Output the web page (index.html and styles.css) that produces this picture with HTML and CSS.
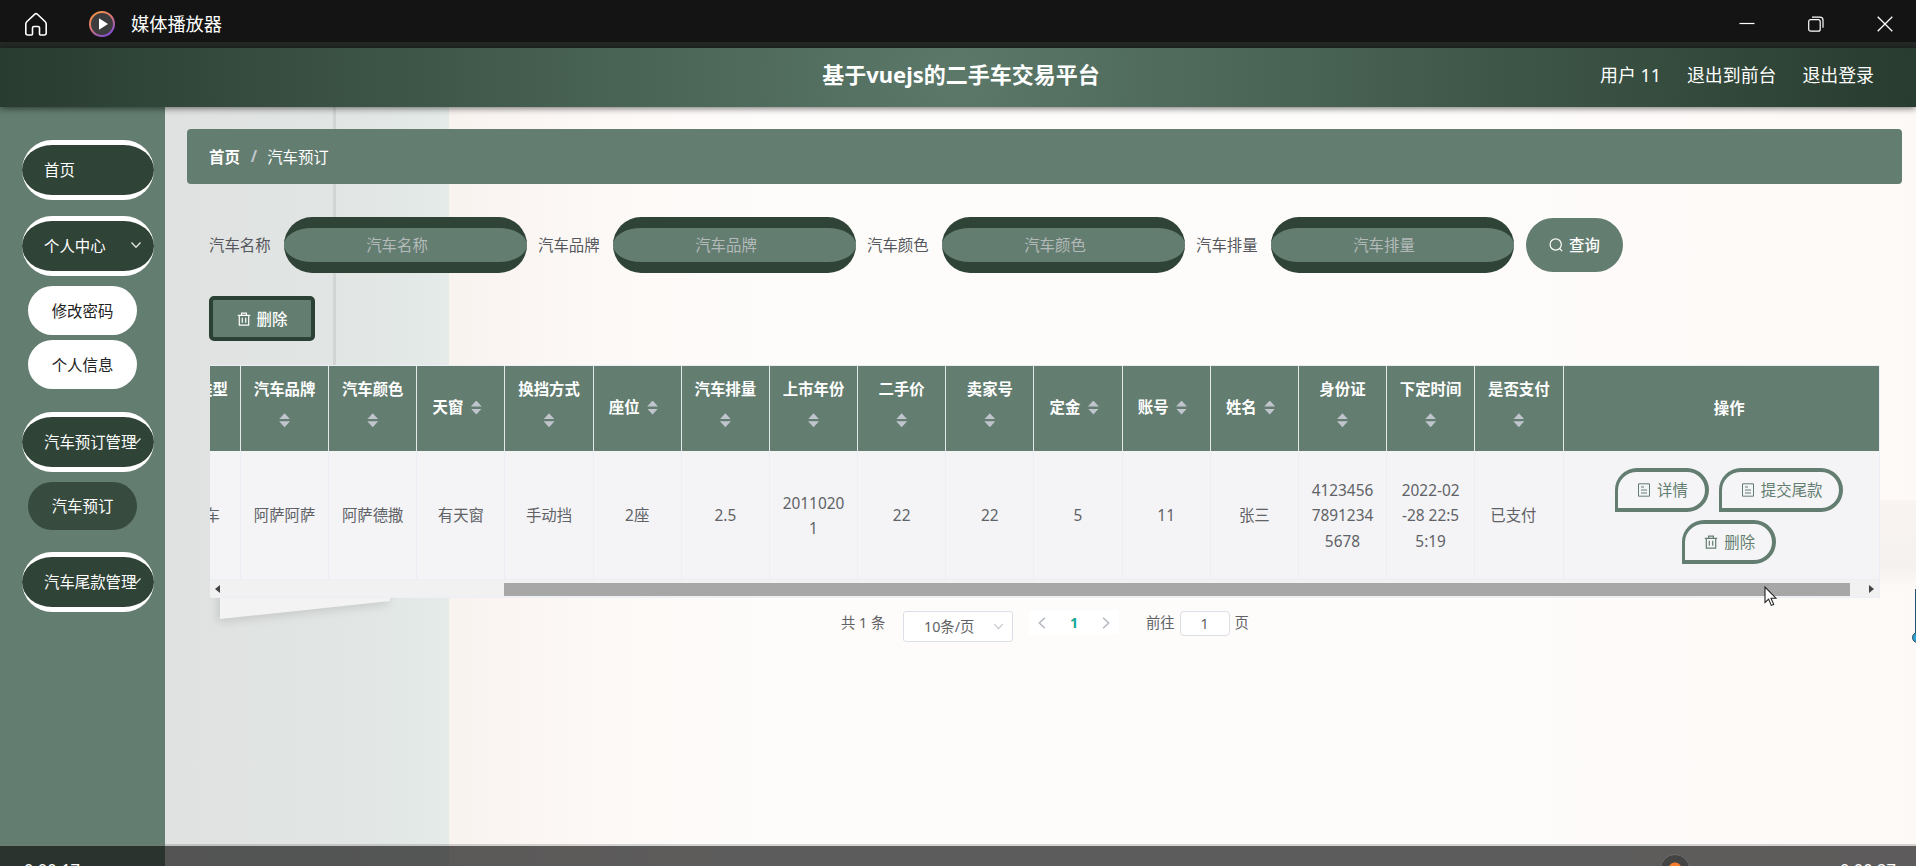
FILE: index.html
```html
<!DOCTYPE html>
<html lang="zh-CN">
<head>
    <meta charset="UTF-8">
    <meta name="viewport" content="width=device-width, initial-scale=1.0">
    <title>基于vuejs的二手车交易平台</title>
    <link rel="stylesheet" href="styles.css">
</head>
<body>
    <svg class="sprite">
        <symbol id="i-chevron" viewBox="0 0 12 12"><path d="M1.500 3.500 6 8.300l4.500-4.800" fill="none" stroke="currentColor" stroke-width="1.300"/></symbol>
        <symbol id="i-trash" viewBox="0 0 14 14"><path d="M.8 3.300h12.400M4.600 3V1.200h4.800V3M2.300 3.500v9.700h9.400V3.500M5.300 5.800v5M8.700 5.800v5" fill="none" stroke="currentColor" stroke-width="1.200"/></symbol>
        <symbol id="i-doc" viewBox="0 0 14 14"><path d="M1.500.8h11v12.400h-11zM4 4h3M4 7h6M4 10h6" fill="none" stroke="currentColor" stroke-width="1"/></symbol>
        <symbol id="i-search" viewBox="0 0 14 14"><circle cx="6.700" cy="6.500" r="5.600" fill="none" stroke="currentColor" stroke-width="1.200"/><path d="m10.700 10.600 2.500 2.600" stroke="currentColor" stroke-width="1.200"/></symbol>
    </svg>

    <div class="titlebar">
        <svg class="home" width="24" height="26" viewBox="0 0 24 26"><path d="M3 10.500 10.600 3.300a2 2 0 0 1 2.800 0L21 10.500c.8.800 1.200 1.600 1.200 2.500v9a2 2 0 0 1-2 2h-3.700a1 1 0 0 1-1-1v-6a1.500 1.500 0 0 0-1.500-1.500h-4A1.500 1.500 0 0 0 8.500 17v6a1 1 0 0 1-1 1H3.800a2 2 0 0 1-2-2v-9c0-.9.400-1.700 1.200-2.500z" fill="none" stroke="#fff" stroke-width="1.600"/></svg>
        <svg class="logo" width="26" height="26" viewBox="0 0 26 26">
            <defs><linearGradient id="ring" x1="0" y1="0" x2=".6" y2="1"><stop offset="0" stop-color="#ff9a3c"/><stop offset=".5" stop-color="#d9776f"/><stop offset="1" stop-color="#8a52d0"/></linearGradient></defs>
            <circle cx="13" cy="13" r="12" fill="#3c3c3e" stroke="url(#ring)" stroke-width="2"/>
            <path d="M10 7.200v11.600l9-5.800z" fill="#fff"/>
        </svg>
        <span class="app-name">媒体播放器</span>
        <div class="win-buttons">
            <svg width="16" height="16" viewBox="0 0 16 16"><path d="M.5 7.500h15" stroke="#fff" stroke-width="1.200"/></svg>
            <svg width="16" height="16" viewBox="0 0 16 16"><rect x=".7" y="3.700" width="11.500" height="11.500" rx="2" fill="none" stroke="#fff" stroke-width="1.200"/><path d="M4 1.200h8a3 3 0 0 1 3 3v7.500" fill="none" stroke="#fff" stroke-width="1.200"/></svg>
            <svg width="16" height="16" viewBox="0 0 16 16"><path d="m.7.700 14.600 14.600M15.300.7.700 15.300" stroke="#fff" stroke-width="1.300"/></svg>
        </div>
    </div>

    <header class="header">
        <h1 class="header-title">基于vuejs的二手车交易平台</h1>
        <div class="header-links">
            <span>用户 11</span>
            <span>退出到前台</span>
            <span>退出登录</span>
        </div>
    </header>

    <div class="container">
        <nav class="sidebar">
            <div class="menu-item">首页</div>
            <div class="menu-item">个人中心<svg class="arrow"><use href="#i-chevron"/></svg></div>
            <div class="submenu">
                <div class="sub-item">修改密码</div>
                <div class="sub-item">个人信息</div>
            </div>
            <div class="menu-item">汽车预订管理<svg class="arrow"><use href="#i-chevron"/></svg></div>
            <div class="submenu">
                <div class="sub-item active">汽车预订</div>
            </div>
            <div class="menu-item">汽车尾款管理<svg class="arrow"><use href="#i-chevron"/></svg></div>
        </nav>

        <main class="main">
            <div class="scene">
                <i class="wall"></i>
                <i class="wall-line"></i>
                <div class="shelf-shadow"><i class="shelf"></i></div>
                <i class="sill"></i>
                <i class="slider"></i>
                <i class="slider-knob"></i>
            </div>

            <div class="breadcrumb"><b>首页</b><span class="sep">/</span><span>汽车预订</span></div>

            <div class="content">
                <div class="search-form">
                    <label>汽车名称</label><input type="text" placeholder="汽车名称">
                    <label>汽车品牌</label><input type="text" placeholder="汽车品牌">
                    <label>汽车颜色</label><input type="text" placeholder="汽车颜色">
                    <label>汽车排量</label><input type="text" placeholder="汽车排量">
                    <button class="btn-search"><svg class="icon"><use href="#i-search"/></svg>查询</button>
                </div>

                <button class="btn-delete"><svg class="icon"><use href="#i-trash"/></svg>删除</button>

                <div class="table-box">
                    <table class="table">
                        <colgroup>
                            <col class="col-type"><col><col><col><col><col><col><col><col><col><col><col><col><col><col><col><col class="col-ops">
                        </colgroup>
                        <thead>
                            <tr>
                                <th class="cut"><div class="th two"><span>汽车类型</span></div></th>
                                <th><div class="th two">汽车品牌<i class="caret"></i></div></th>
                                <th><div class="th two">汽车颜色<i class="caret"></i></div></th>
                                <th><div class="th">天窗<i class="caret"></i></div></th>
                                <th><div class="th two">换挡方式<i class="caret"></i></div></th>
                                <th><div class="th">座位<i class="caret"></i></div></th>
                                <th><div class="th two">汽车排量<i class="caret"></i></div></th>
                                <th><div class="th two">上市年份<i class="caret"></i></div></th>
                                <th><div class="th two">二手价<i class="caret"></i></div></th>
                                <th><div class="th two">卖家号<i class="caret"></i></div></th>
                                <th><div class="th">定金<i class="caret"></i></div></th>
                                <th><div class="th">账号<i class="caret"></i></div></th>
                                <th><div class="th">姓名<i class="caret"></i></div></th>
                                <th><div class="th two">身份证<i class="caret"></i></div></th>
                                <th><div class="th two">下定时间<i class="caret"></i></div></th>
                                <th><div class="th two">是否支付<i class="caret"></i></div></th>
                                <th class="ops">操作</th>
                            </tr>
                        </thead>
                        <tbody>
                            <tr>
                                <td class="cut"><div class="cut-text"><span>轿车</span></div></td>
                                <td>阿萨阿萨</td>
                                <td>阿萨德撒</td>
                                <td>有天窗</td>
                                <td>手动挡</td>
                                <td>2座</td>
                                <td>2.5</td>
                                <td>20110201</td>
                                <td>22</td>
                                <td>22</td>
                                <td>5</td>
                                <td>11</td>
                                <td>张三</td>
                                <td>412345678912345678</td>
                                <td>2022-02<br>-28 22:5<br>5:19</td>
                                <td class="paid">已支付</td>
                                <td class="ops">
                                    <div class="ops-row">
                                        <button class="btn-op"><svg class="icon"><use href="#i-doc"/></svg>详情</button>
                                        <button class="btn-op"><svg class="icon"><use href="#i-doc"/></svg>提交尾款</button>
                                        <button class="btn-op"><svg class="icon"><use href="#i-trash"/></svg>删除</button>
                                    </div>
                                </td>
                            </tr>
                        </tbody>
                    </table>
                    <div class="scrollbar">
                        <i class="scroll-left"></i>
                        <div class="thumb"></div>
                        <i class="scroll-right"></i>
                    </div>
                </div>

                <div class="pagination">
                    <span class="total">共 1 条</span>
                    <div class="page-size"><span>10条/页</span><svg class="arrow"><use href="#i-chevron"/></svg></div>
                    <div class="pager">
                        <svg class="prev"><use href="#i-chevron"/></svg>
                        <b>1</b>
                        <svg class="next"><use href="#i-chevron"/></svg>
                    </div>
                    <span class="jump">前往</span>
                    <input class="page-input" type="text" value="1">
                    <span>页</span>
                </div>
            </div>
        </main>
    </div>

    <div class="player">
        <span>0:00:17</span>
        <i class="knob"></i>
        <span class="time-left">0:00:27</span>
    </div>

    <svg class="cursor" width="14" height="21" viewBox="0 0 14 21"><path d="M1 1v15.500l3.600-3.400 2.700 6.300 2.400-1-2.700-6.200h4.900z" fill="#fff" stroke="#222" stroke-width="1.100"/></svg>
</body>
</html>
```
FILE: styles.css
```css
* {
    box-sizing: border-box;
}
body {
    margin: 0;
    height: 866px;
    overflow: hidden;
    display: flex;
    flex-direction: column;
    position: relative;
    font-family: "Noto Sans", "Noto Sans CJK SC", sans-serif;
    font-size: 15.4px;
    color: #606266;
}
button, input {
    font-family: inherit;
    font-size: inherit;
}
.sprite {
    position: absolute;
    width: 0;
    height: 0;
}
.icon {
    width: 14px;
    height: 14px;
    flex: none;
}

/* window title bar */
.titlebar {
    height: 48px;
    flex: none;
    display: flex;
    align-items: flex-start;
    background: #141414;
    border-bottom: 6px solid #252a27;
    padding: 11px 23px 0 24px;
    color: #fff;
}
.logo {
    margin-left: 41px;
}
.app-name {
    margin-left: 16px;
    font-size: 18.2px;
    line-height: 27px;
}
.win-buttons {
    margin: 5px 0 0 auto;
    display: flex;
    gap: 53px;
}

/* page header */
.header {
    height: 59px;
    flex: none;
    position: relative;
    z-index: 2;
    display: grid;
    grid-template-columns: 1fr auto 1fr;
    align-items: center;
    padding: 0 42px 8px 48px;
    color: #fff;
    background: radial-gradient(ellipse 1010px 1010px at 50% 50%, #5b7869 0%, #25392c 100%);
    box-shadow: 0 1px 7px rgba(0, 0, 0, 0.6);
}
.header-title {
    grid-column: 2;
    margin: 0;
    font-size: 22px;
    line-height: 30px;
}
.header-links {
    display: flex;
    justify-content: flex-end;
    gap: 26px;
    font-size: 17.9px;
}

.container {
    flex: 1;
    display: flex;
    min-height: 0;
}

/* sidebar */
.sidebar {
    width: 165px;
    flex: none;
    background: #637d70;
    padding: 33px 11px 0 22px;
}
.menu-item {
    height: 60px;
    margin-bottom: 16px;
    padding: 0 0 1px 22px;
    display: flex;
    align-items: center;
    position: relative;
    white-space: nowrap;
    color: #fff;
    background: #2f4337;
    border-top: 5px solid #fff;
    border-bottom: 5px solid #fff;
    border-radius: 30px;
}
.menu-item .arrow {
    position: absolute;
    right: 12px;
    top: 18px;
    width: 12px;
    height: 12px;
    color: #e0e4e1;
}
.submenu {
    display: flex;
    flex-direction: column;
    gap: 5px;
    margin: -6px 0 22.5px 6px;
}
.sub-item {
    width: 109px;
    height: 49px;
    display: flex;
    align-items: center;
    justify-content: center;
    color: #222;
    background: #fff;
    border-radius: 25px;
}
.sub-item.active {
    height: 48px;
    color: #fff;
    background: #374b3f;
}

/* main area */
.main {
    flex: 1;
    min-width: 0;
    position: relative;
    padding: 22px 14px 0 22px;
    background: linear-gradient(90deg, #f9f3f0 284px, #fcf8f6 420px, #fefcfb 600px, #fefcfb 1300px, #fdf9f7);
}
.scene {
    position: absolute;
    inset: 0;
    overflow: hidden;
}
.scene i {
    position: absolute;
}
.wall {
    left: 0;
    top: 0;
    bottom: 0;
    width: 284px;
    background: linear-gradient(90deg, #dfe2e1, #e1e5e3 60%, #e4ebe8);
}
.wall-line {
    left: 168px;
    top: 0;
    width: 3px;
    height: 260px;
    background: #d3d5d4;
}
.shelf-shadow {
    position: absolute;
    inset: 0;
    filter: drop-shadow(-2px 3px 5px rgba(0, 0, 0, 0.12));
}
.shelf {
    left: 55px;
    top: 480px;
    width: 170px;
    height: 32px;
    background: #f3f3f3;
    clip-path: polygon(0 0, 100% 0, 100% 44%, 0 100%);
}
.sill {
    right: 0;
    top: 393px;
    width: 38px;
    height: 89px;
    background: linear-gradient(#f9f4f1, #f5f1ee 75%, #fdfaf8);
}
.slider {
    right: 0;
    top: 482px;
    width: 1px;
    height: 45px;
    background: #26536b;
}
.slider-knob {
    right: -7px;
    top: 525px;
    width: 11px;
    height: 11px;
    background: #2f9fd0;
    border: 1px solid #2b4a5c;
    border-radius: 50%;
}
.breadcrumb {
    position: relative;
    height: 55px;
    padding: 0 0 1px 22px;
    display: flex;
    align-items: center;
    color: #fff;
    background: #637d70;
    border-radius: 4px;
}
.sep {
    margin: 0 10px 0 11px;
    color: #c0c4cc;
    font-weight: bold;
}
.content {
    position: relative;
    padding: 33px 22px 0 22px;
}

/* search */
.search-form {
    display: flex;
    align-items: center;
    color: #55575c;
}
.search-form label {
    width: 62px;
    margin-right: 13px;
    padding-bottom: 1px;
    white-space: nowrap;
}
.search-form input {
    width: 243px;
    height: 56px;
    margin-right: 11px;
    padding: 0 33px 0 16px;
    text-align: center;
    color: #fff;
    background: #637d70;
    border: 0 solid #2f4337;
    border-width: 11px 0;
    border-radius: 28px;
}
.search-form input::placeholder {
    color: #b4bab9;
}
.btn-search {
    width: 97px;
    height: 54px;
    margin-left: 1px;
    display: flex;
    align-items: center;
    justify-content: center;
    gap: 6px;
    padding: 0 0 1px;
    color: #fff;
    font-weight: 500;
    background: #637d70;
    border: 0;
    border-radius: 27px;
}
.btn-delete {
    width: 106px;
    height: 45px;
    margin-top: 23px;
    display: flex;
    align-items: center;
    justify-content: center;
    gap: 6px;
    padding: 0;
    color: #fff;
    font-weight: 500;
    background: #637d70;
    border: 4px solid #2b4135;
    border-radius: 5px;
}

/* table */
.table-box {
    width: 1670px;
    height: 233px;
    margin: 24px 0 0 1px;
    overflow: hidden;
    background: #f4f4f6;
    border: 1px solid #ebeef5;
    border-left: 0;
}
.table {
    width: 1669px;
    table-layout: fixed;
    border-collapse: separate;
    border-spacing: 0;
    text-align: center;
    line-height: 25.4px;
}
.col-type {
    width: 31px;
}
.col-ops {
    width: 315.5px;
}
.table th {
    height: 85px;
    padding: 0 0 2px;
    color: #fff;
    background: #637d70;
    border-right: 1px solid #e3e9ea;
}
.table th.ops {
    padding: 0 0 0 16px;
    border-right: 0;
}
.th {
    display: flex;
    align-items: center;
    justify-content: center;
}
.th.two {
    flex-direction: column;
}
.caret {
    width: 26px;
    height: 36px;
    display: flex;
    flex-direction: column;
    align-items: center;
    justify-content: center;
    gap: 2px;
}
.caret::before, .caret::after {
    content: "";
    width: 11px;
    height: 6px;
    background: #c0c4cc;
}
.caret::before {
    clip-path: polygon(50% 0, 100% 100%, 0 100%);
}
.caret::after {
    clip-path: polygon(0 0, 100% 0, 50% 100%);
}
.th.two span {
    align-self: flex-end;
    height: 61px;
    margin-right: 12px;
    white-space: nowrap;
}
.cut-text {
    display: flex;
    justify-content: flex-end;
    margin-right: 20px;
    white-space: nowrap;
}
.table .cut {
    overflow: hidden;
}
.table td {
    height: 129px;
    padding: 2px 11px 0;
    word-break: break-all;
    border-right: 1px solid #ebeef5;
    border-bottom: 1px solid #ebeef5;
}
.table td.cut {
    padding: 2px 0 0;
}
.table td.paid {
    padding-right: 22px;
}
.table td.ops {
    padding: 2px 0 0 16px;
    border-right: 0;
}
.ops-row {
    display: flex;
    flex-wrap: wrap;
    justify-content: center;
    gap: 8px 10px;
}
.btn-op {
    height: 44px;
    padding: 0 17px 1px 19px;
    display: flex;
    align-items: center;
    gap: 6px;
    color: #637d70;
    background: #f5f5f7;
    border: 4px solid #637d70;
    border-left-width: 3px;
    border-radius: 22px 22px 22px 0;
}
.scrollbar {
    height: 18px;
    display: flex;
    align-items: center;
    padding: 0 5px;
    background: #f1f1f2;
}
.thumb {
    width: 1346px;
    height: 13px;
    margin: 0 auto 0 284px;
    background: #a8a7a8;
}
.scroll-left, .scroll-right {
    border: 4px solid transparent;
}
.scroll-left {
    border-left: 0;
    border-right: 5px solid #444;
}
.scroll-right {
    border-right: 0;
    border-left: 5px solid #444;
}

/* pagination */
.pagination {
    display: flex;
    align-items: flex-start;
    margin: 13px 0 0 632px;
    font-size: 14.3px;
    line-height: 24px;
    white-space: nowrap;
}
.total {
    width: 62px;
}
.page-size {
    width: 110px;
    height: 31px;
    display: flex;
    align-items: center;
    justify-content: space-between;
    padding: 0 8px 0 20px;
    background: #fff;
    border: 1px solid #dcdfe6;
    border-radius: 3px;
}
.page-size .arrow {
    width: 11px;
    height: 11px;
    color: #c0c4cc;
}
.pager {
    width: 90px;
    height: 24px;
    margin: 0 27px 0 16px;
    display: flex;
    align-items: center;
    justify-content: space-between;
    padding: 0 6px;
    background: #fff;
    color: #18a799;
}
.pager svg {
    width: 14px;
    height: 14px;
    color: #b4b8c0;
}
.prev {
    transform: rotate(90deg);
}
.next {
    transform: rotate(-90deg);
}
.page-input {
    width: 50px;
    height: 25px;
    margin: 0 5px 0 5px;
    padding: 0;
    text-align: center;
    color: #606266;
    background: #fff;
    border: 1px solid #dcdfe6;
    border-radius: 4px;
}

/* player controls over the bottom edge */
.player {
    position: absolute;
    left: 0;
    right: 0;
    bottom: 0;
    height: 22px;
    z-index: 3;
    overflow: hidden;
    display: flex;
    align-items: flex-start;
    padding: 13px 20px 0 24px;
    font-size: 16.5px;
    line-height: 22px;
    color: #fff;
    background: rgba(16, 16, 16, 0.68);
    border-top: 2px solid rgba(120, 120, 120, 0.3);
    background-clip: padding-box;
}
.knob {
    width: 30px;
    height: 30px;
    flex: none;
    margin: -5px 0 0 auto;
    background: radial-gradient(circle, #f57c2a 6px, #444 7px);
    border: 1px solid #6a6a6a;
    border-radius: 50%;
}
.time-left {
    margin-left: 150px;
}
.cursor {
    position: absolute;
    left: 1764px;
    top: 586px;
    z-index: 4;
}
```
